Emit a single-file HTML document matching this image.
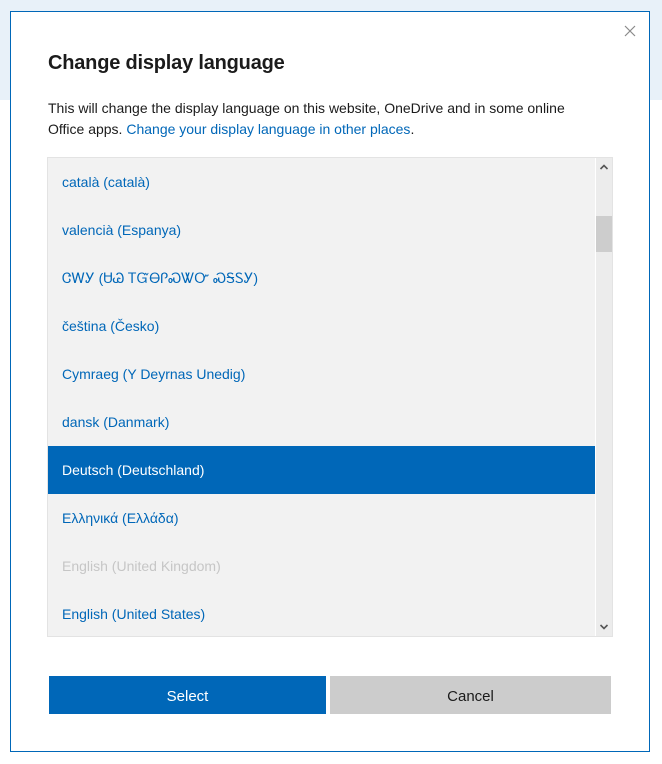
<!DOCTYPE html>
<html><head><meta charset="utf-8"><style>
*{margin:0;padding:0;box-sizing:border-box}
body{width:662px;height:764px;overflow:hidden;background:#fff;font-family:"Liberation Sans","DejaVu Sans",sans-serif;position:relative}
.topbg{position:absolute;left:0;top:0;width:662px;height:100px;background:#e8f1f9}
.dlg{position:absolute;left:10px;top:11px;width:640px;height:741px;background:#fff;border:1px solid #0067b8}
h1{position:absolute;left:37px;top:40px;font-size:20px;font-weight:bold;color:#1b1b1b;letter-spacing:-0.2px}
.desc{position:absolute;left:37px;top:86px;width:548px;font-size:14px;line-height:21px;color:#1b1b1b}
.desc a{color:#0067b8;text-decoration:none}
.close{position:absolute;left:612px;top:12px}
.list{position:absolute;left:36px;top:145px;width:566px;height:480px;background:#f2f2f2;border:1px solid #e3e3e3;overflow:hidden}
.item{height:48px;line-height:48px;padding-left:14px;font-size:14px;color:#0067b8;width:548px}
.item.sel{background:#0067b8;color:#fff}
.item.dis{color:#c6c6c6}
.sb{position:absolute;right:0;top:0;width:17px;height:100%;background:#ececec;border-left:1px solid #fff}
.thumb{position:absolute;left:0;top:58px;width:16px;height:36px;background:#cdcdcd}
.btn{position:absolute;top:664px;height:38px;line-height:42px;text-align:center;font-size:15px}
.b1{left:38px;width:277px;background:#0067b8;color:#fff}
.b2{left:319px;width:281px;background:#cccccc;color:#1b1b1b}
</style></head><body>
<div class="topbg"></div>
<div class="dlg">
<svg class="close" width="14" height="14" viewBox="0 0 14 14"><path d="M2 2L12 12M12 2L2 12" stroke="#8a8a8a" stroke-width="1.2"/></svg>
<h1>Change display language</h1>
<div class="desc">This will change the display language on this website, OneDrive and in some online Office apps. <a>Change your display language in other places</a>.</div>
<div class="list">
<div class="item">català (català)</div>
<div class="item">valencià (Espanya)</div>
<div class="item">ᏣᎳᎩ (ᏌᏊ ᎢᏳᎾᎵᏍᏔᏅ ᏍᎦᏚᎩ)</div>
<div class="item">čeština (Česko)</div>
<div class="item">Cymraeg (Y Deyrnas Unedig)</div>
<div class="item">dansk (Danmark)</div>
<div class="item sel">Deutsch (Deutschland)</div>
<div class="item">Ελληνικά (Ελλάδα)</div>
<div class="item dis">English (United Kingdom)</div>
<div class="item">English (United States)</div>
<div class="sb"><div class="thumb"></div>
<svg style="position:absolute;left:3px;top:5px" width="10" height="8" viewBox="0 0 10 8"><path d="M1.5 6L5 2.5L8.5 6" stroke="#555" stroke-width="1.6" fill="none"/></svg>
<svg style="position:absolute;left:3px;bottom:5px" width="10" height="8" viewBox="0 0 10 8"><path d="M1.5 2L5 5.5L8.5 2" stroke="#555" stroke-width="1.6" fill="none"/></svg>
</div>
</div>
<div class="btn b1">Select</div>
<div class="btn b2">Cancel</div>
</div>
</body></html>
